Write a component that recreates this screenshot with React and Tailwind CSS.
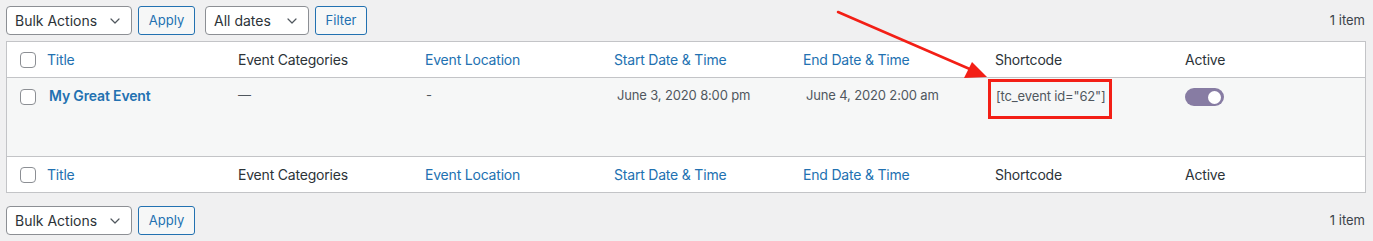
import { ChevronDown } from 'lucide-react';

const font = { fontFamily: '-apple-system, "Inter", "Liberation Sans", sans-serif' };

function Select({ label, width }) {
  return (
    <div className={`flex h-[29px] items-center justify-between rounded-[4px] border border-[#8c8f94] bg-white pl-[8px] pr-[8px] text-[14px] text-[#2c3338] ${width}`}>
      <span>{label}</span>
      <ChevronDown className="h-4 w-4 text-[#50575e]" strokeWidth={1.8} />
    </div>
  );
}

function Button({ label, width }) {
  return (
    <button type="button" className={`flex h-[29px] items-center justify-center rounded-[3px] border border-[#2271b1] bg-[#f6f7f7] text-[13px] text-[#2271b1] ${width}`}>
      {label}
    </button>
  );
}

function Checkbox() {
  return <div className="h-4 w-4 rounded-[4px] border border-[#8c8f94] bg-white" />;
}

const cols = 'grid grid-cols-[31px_191px_187px_189px_189px_192px_190px_1fr]';

function HeaderRow({ border }) {
  return (
    <div className={`${cols} h-[36px] items-center text-[14px] tracking-[-0.2px] ${border}`}>
      <div className="flex justify-center pl-[10px]">
        <Checkbox />
      </div>
      <div className="pl-[9px] text-[#2271b1]">Title</div>
      <div className="pl-[9px] text-[#2c3338]">Event Categories</div>
      <div className="pl-[9px] text-[#2271b1]">Event Location</div>
      <div className="pl-[9px] text-[#2271b1]">Start Date &amp; Time</div>
      <div className="pl-[9px] text-[#2271b1]">End Date &amp; Time</div>
      <div className="pl-[9px] text-[#2c3338]">Shortcode</div>
      <div className="pl-[9px] text-[#2c3338]">Active</div>
    </div>
  );
}

export default function App() {
  return (
    <div className="relative h-[241px] w-[1373px] overflow-hidden bg-[#f0f0f1] px-[6px] pt-[6px]" style={font}>
      <div className="flex items-center">
        <Select label="Bulk Actions" width="w-[126px]" />
        <div className="ml-[6px]"><Button label="Apply" width="w-[57px]" /></div>
        <div className="ml-[10px]"><Select label="All dates" width="w-[104px]" /></div>
        <div className="ml-[6px]"><Button label="Filter" width="w-[52px]" /></div>
        <div className="ml-auto pr-[2px] text-[13px] text-[#3c434a]">1 item</div>
      </div>

      <div className="mt-[6px] w-[1360px] border border-[#c3c4c7] bg-white">
        <HeaderRow border="border-b border-[#c3c4c7]" />
        <div className={`${cols} h-[78px] items-start bg-[#f6f7f7] pt-[7px] text-[13px] tracking-[-0.15px] text-[#50575e]`}>
          <div className="flex justify-center pl-[10px] pt-[4px]">
            <Checkbox />
          </div>
          <div className="pl-[11px] text-[14px] font-semibold text-[#2271b1] leading-[21px]">My Great Event</div>
          <div className="pl-[9px] leading-[21px] text-[#50575e]">—</div>
          <div className="pl-[10px] leading-[21px]">-</div>
          <div className="pl-[12px] leading-[21px]">June 3, 2020 8:00 pm</div>
          <div className="pl-[12px] leading-[21px]">June 4, 2020 2:00 am</div>
          <div className="pl-[2px]">
            <div className="-mt-[6px] flex h-[40px] w-[124px] items-start border-[3px] border-[#f31f16] pl-[5px] pt-[5px] leading-[18px] text-[#50575e]">
              [tc_event id="62"]
            </div>
          </div>
          <div className="pl-[9px] pt-[3px]">
            <div className="flex h-[18px] w-[39px] items-center justify-end rounded-full bg-[#877ca3] pr-[3px]">
              <div className="h-[13px] w-[13px] rounded-full bg-white" />
            </div>
          </div>
        </div>
        <HeaderRow border="border-t border-[#c3c4c7]" />
      </div>

      <div className="mt-[13px] flex items-center">
        <Select label="Bulk Actions" width="w-[126px]" />
        <div className="ml-[6px]"><Button label="Apply" width="w-[57px]" /></div>
        <div className="ml-auto pr-[2px] text-[13px] text-[#3c434a]">1 item</div>
      </div>

      <svg className="pointer-events-none absolute left-0 top-0" width="1373" height="241">
        <line x1="838" y1="12" x2="972" y2="70" stroke="#f31f16" strokeWidth="2.5" strokeLinecap="round" />
        <polygon points="987,77 964,78 972,62" fill="#f31f16" />
      </svg>
    </div>
  );
}
